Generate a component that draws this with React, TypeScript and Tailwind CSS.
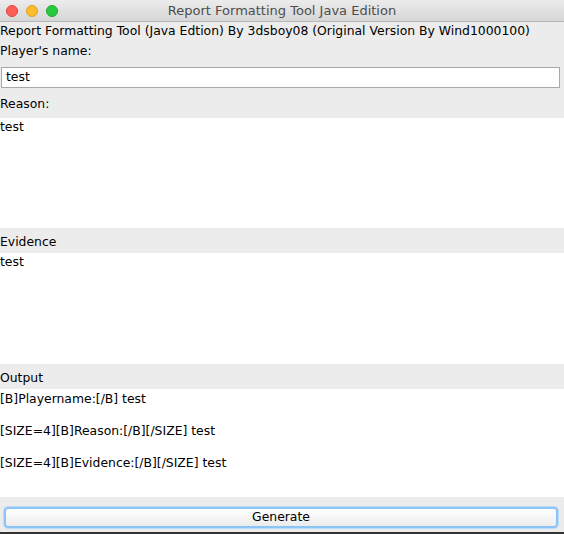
import React from "react";

const font = { fontFamily: '"DejaVu Sans", "Lucida Grande", sans-serif' };

function TrafficLights() {
  return (
    <div className="absolute left-[6px] top-[5px] flex gap-[8px]">
      <span className="h-[12px] w-[12px] rounded-full bg-[#fc5f57] border border-[#e0443e]" />
      <span className="h-[12px] w-[12px] rounded-full bg-[#fdbc2e] border border-[#dea123]" />
      <span className="h-[12px] w-[12px] rounded-full bg-[#28c840] border border-[#1aab29]" />
    </div>
  );
}

function SectionLabel({ text }: { text: string }) {
  return (
    <div className="flex h-[25px] items-center bg-[#ececec] pt-[4px] text-[12.4px] text-black">
      {text}
    </div>
  );
}

function TextArea({ lines, height }: { lines: string[]; height: string }) {
  return (
    <div className={`bg-white text-[12.4px] leading-[16px] text-black ${height}`}>
      {lines.map((l, i) => (
        <div key={i} className="pt-[1px]">
          {l}
        </div>
      ))}
    </div>
  );
}

export default function App() {
  return (
    <div className="flex h-[534px] w-[564px] flex-col overflow-hidden bg-[#ececec]" style={font}>
      <div className="relative flex h-[22px] shrink-0 items-center justify-center border-b border-[#b8b8b8] bg-gradient-to-b from-[#ececec] to-[#d6d6d6] text-[13px] text-[#4d4d4d]">
        <TrafficLights />
        Report Formatting Tool Java Edition
      </div>
      <div className="flex h-[18px] items-center text-[12.4px] text-black">
        Report Formatting Tool (Java Edtion) By 3dsboy08 (Original Version By Wind1000100)
      </div>
      <div className="flex h-[22px] items-center text-[12.4px] text-black">Player's name:</div>
      <div className="px-[1px] pt-[5px]">
        <div className="flex h-[21px] w-[559px] items-center border border-[#a9a9a9] bg-white px-[4px] text-[12.4px] text-black">
          test
        </div>
      </div>
      <div className="flex h-[30px] items-end pb-[4px] text-[12.4px] text-black">Reason:</div>
      <TextArea lines={["test"]} height="h-[110px]" />
      <SectionLabel text="Evidence" />
      <TextArea lines={["test"]} height="h-[111px]" />
      <SectionLabel text="Output" />
      <div className="h-[108px] bg-white pt-[1px] text-[12.4px] text-black">
        <div className="h-[32px]">[B]Playername:[/B] test</div>
        <div className="h-[32px]">[SIZE=4][B]Reason:[/B][/SIZE] test</div>
        <div className="h-[32px]">[SIZE=4][B]Evidence:[/B][/SIZE] test</div>
      </div>
      <div className="flex flex-1 items-start px-[4px] pt-[10px]">
        <button className="flex h-[21px] w-[554px] items-center justify-center rounded-[4px] border-[2px] border-[#8cc4f8] bg-gradient-to-b from-white to-[#ececec] text-[12.4px] text-black shadow-[0_0_0_1px_#bcdcfb]">
          Generate
        </button>
      </div>
      <div className="h-[2px] bg-[#333]" />
    </div>
  );
}
